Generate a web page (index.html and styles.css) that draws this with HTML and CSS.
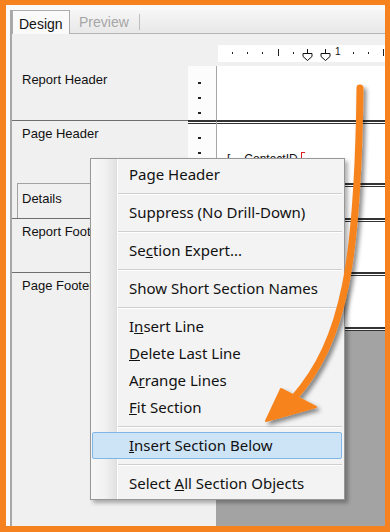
FILE: index.html
```html
<!DOCTYPE html>
<html lang="en">
<head>
  <meta charset="UTF-8">
  <title>Section context menu</title>
  <link rel="stylesheet" href="styles.css">
</head>
<body>
  <div class="window">
    <div class="pane">
      <!-- Design / Preview tabs -->
      <div class="tabs">
        <div class="tab active">Design</div>
        <div class="tab off">Preview</div>
      </div>

      <div class="workspace">
        <!-- top ruler row -->
        <div class="row top">
          <div class="label"></div>
          <div class="vr plain"></div>
          <div class="rulerwrap">
            <svg class="ruler" width="167" height="17" viewBox="0 0 167 17">
              <g fill="#222">
                <rect x="14" y="7" width="1" height="2"/>
                <rect x="29" y="7" width="1" height="2"/>
                <rect x="44" y="7" width="1" height="2"/>
                <rect x="60" y="4" width="1" height="7"/>
                <rect x="75" y="7" width="1" height="2"/>
                <rect x="135" y="7" width="1" height="2"/>
                <rect x="150" y="7" width="1" height="2"/>
                <rect x="165" y="4" width="1" height="7"/>
              </g>
              <g fill="#fff" stroke="#111" stroke-width="1">
                <path d="M89.5 4 V8.5 M85 8.5 H94 V11.5 L89.5 15.5 L85 11.5 Z"/>
                <path d="M107.5 4 V8.5 M103 8.5 H112 V11.5 L107.5 15.5 L103 11.5 Z"/>
              </g>
              <text x="117" y="10" font-size="10" font-family="Liberation Sans, sans-serif" fill="#111">1</text>
            </svg>
          </div>
        </div>

        <div class="row rh">
          <div class="label">Report Header</div>
          <div class="vr dots-a"></div>
          <div class="band"></div>
        </div>

        <div class="row ph">
          <div class="label line">Page Header</div>
          <div class="vr sep dots-b"></div>
          <div class="band sep">
            <div class="field">[<span class="fname">ContactID</span><span class="mark"></span></div>
          </div>
        </div>

        <div class="row det">
          <div class="label sel"><div class="selbox">Details</div></div>
          <div class="vr sep"></div>
          <div class="band sep"></div>
        </div>

        <div class="row rf">
          <div class="label line">Report Footer</div>
          <div class="vr sep"></div>
          <div class="band sep"></div>
        </div>

        <div class="row pf">
          <div class="label line">Page Footer</div>
          <div class="vr sep"></div>
          <div class="band sep"></div>
        </div>

        <div class="row end">
          <div class="label"></div>
          <div class="vr plain"></div>
          <div class="band sep grey"></div>
        </div>
      </div>
    </div>
  </div>

  <!-- context menu -->
  <div class="menu">
    <div class="item">Page Header</div>
    <div class="divider"></div>
    <div class="item">Suppress (No Drill-Down)</div>
    <div class="divider"></div>
    <div class="item">Se<u>c</u>tion Expert...</div>
    <div class="divider"></div>
    <div class="item">Show Short Section Names</div>
    <div class="divider"></div>
    <div class="item">I<u>n</u>sert Line</div>
    <div class="item"><u>D</u>elete Last Line</div>
    <div class="item">A<u>r</u>range Lines</div>
    <div class="item"><u>F</u>it Section</div>
    <div class="divider"></div>
    <div class="item hot"><u>I</u>nsert Section Below</div>
    <div class="divider"></div>
    <div class="item">Select <u>A</u>ll Section Objects</div>
  </div>

  <!-- annotation arrow -->
  <svg class="arrow" width="390" height="532" viewBox="0 0 390 532">
    <defs>
      <filter id="shade" x="-20%" y="-20%" width="140%" height="140%">
        <feDropShadow dx="3" dy="3" stdDeviation="2" flood-color="#000" flood-opacity="0.45"/>
      </filter>
    </defs>
    <g filter="url(#shade)" fill="#f7831f" stroke="#f7831f">
      <path d="M360 88 C358 260, 345 340, 294 398" fill="none" stroke-width="7" stroke-linecap="round"/>
      <polygon points="266,421 281,389 316,407" stroke-width="2" stroke-linejoin="round"/>
    </g>
  </svg>
</body>
</html>
```

FILE: styles.css
```css
body {
  margin: 0;
  width: 390px;
  height: 532px;
  box-sizing: border-box;
  padding: 5px 5px 6px 6px;
  background-color: #f5821f;
  position: relative;
  overflow: hidden;
  font-family: "Liberation Sans", Arial, sans-serif;
  color: #111;
}

.window {
  height: 100%;
  box-sizing: border-box;
  padding-top: 5px;
  background-color: #fafafa;
  display: flex;
  flex-direction: column;
}

.pane {
  flex: 1;
  margin-left: 4px;
  border-left: 2px solid #a8a8a8;
  display: flex;
  flex-direction: column;
  min-height: 0;
}

/* tabs */
.tabs {
  height: 24px;
  box-sizing: border-box;
  display: flex;
  align-items: flex-start;
  background: linear-gradient(#f6f6f6, #e8e8e8);
  border-bottom: 1px solid #b4b4b4;
}

.tab {
  font-size: 14px;
  box-sizing: border-box;
}

.tab.active {
  height: 24px;
  width: 58px;
  padding: 5px 0 0 6px;
  background-color: #fafafa;
  border: 1px solid #acacac;
  border-bottom: 0;
}

.tab.off {
  margin-top: 4px;
  height: 16px;
  line-height: 16px;
  padding: 0 10px 0 9px;
  color: #a6a6a6;
  border-right: 1px solid #bdbdbd;
}

/* section rows */
.workspace {
  flex: 1;
  display: flex;
  flex-direction: column;
  background-color: #f0f0f0;
  min-height: 0;
}

.row {
  display: flex;
}

.row.top { height: 32px; }
.row.rh { height: 54px; }
.row.ph { height: 63px; }
.row.det { height: 35px; }
.row.rf { height: 54px; }
.row.pf { height: 55px; }
.row.end { flex: 1; }

.label {
  width: 176px;
  flex: none;
  box-sizing: border-box;
  padding: 6px 0 0 10px;
  font-size: 13px;
  line-height: 15px;
  white-space: nowrap;
  overflow: hidden;
}

.label.line {
  border-top: 1px solid #6f6f6f;
  padding-top: 5px;
}

.label.sel {
  padding: 0 0 0 5px;
}

.selbox {
  height: 100%;
  box-sizing: border-box;
  padding: 7px 0 0 4px;
  border: 1px solid #a2a2a2;
  border-bottom: 0;
}

.vr {
  width: 28px;
  flex: none;
  box-sizing: border-box;
  background-color: #fcfcfc;
}

.vr.plain {
  background-color: #f0f0f0;
}

.dots-a {
  background-image: linear-gradient(#222, #222), linear-gradient(#222, #222), linear-gradient(#222, #222);
  background-size: 3px 2px;
  background-repeat: no-repeat;
  background-position: 10px 16px, 10px 31px, 10px 46px;
}

.dots-b {
  background-image: linear-gradient(#222, #222), linear-gradient(#222, #222), linear-gradient(#222, #222);
  background-size: 3px 2px;
  background-repeat: no-repeat;
  background-position: 10px 15px, 10px 30px, 10px 45px;
}

.band {
  flex: 1;
  box-sizing: border-box;
  background-color: #fff;
  border-left: 1px solid #a5a5a5;
}

.sep {
  border-top: 2px solid #333;
  box-shadow: inset 0 1px 0 #fff, inset 0 2px 0 #333;
}

.band.grey {
  background-color: #a3a3a3;
  border-left-color: #a3a3a3;
}

.rulerwrap {
  flex: 1;
  padding: 11px 0 0 2px;
}

.ruler {
  display: block;
  background-color: #fff;
}

.field {
  margin: 30px 0 0 10px;
  font-size: 12px;
  line-height: 14px;
  white-space: nowrap;
}

.fname {
  margin-left: 14px;
}

.mark {
  display: inline-block;
  width: 3px;
  height: 8px;
  margin-left: 3px;
  border-left: 1px solid #e0201c;
  border-top: 1px solid #e0201c;
  vertical-align: top;
}

/* context menu */
.menu {
  position: absolute;
  left: 90px;
  top: 158px;
  width: 255px;
  box-sizing: border-box;
  padding: 2px 1px;
  border: 1px solid #979797;
  background-color: #f3f3f3;
  background-image: linear-gradient(to right, #f7f7f7 0, #f1f1f1 14px, #e2e2e2 25px, #dadada 26px, #fff 26px, #fff 27px, transparent 27px);
  box-shadow: 3px 3px 4px rgba(0, 0, 0, 0.3);
  font-family: "Noto Sans", "Open Sans", sans-serif;
  font-size: 15px;
  color: #111;
}

.item {
  height: 27px;
  line-height: 27px;
  box-sizing: border-box;
  padding-left: 37px;
  white-space: nowrap;
}

.item.hot {
  margin-right: 1px;
  line-height: 25px;
  padding-left: 36px;
  background-color: #cde4f7;
  border: 1px solid #80b5e8;
  border-radius: 2px;
}

.divider {
  height: 11px;
  margin-left: 26px;
  margin-right: 1px;
  background: linear-gradient(#cfcfcf, #cfcfcf) 0 5px / 100% 1px no-repeat,
              linear-gradient(#fff, #fff) 0 6px / 100% 1px no-repeat;
}

.arrow {
  position: absolute;
  left: 0;
  top: 0;
  pointer-events: none;
}
```
